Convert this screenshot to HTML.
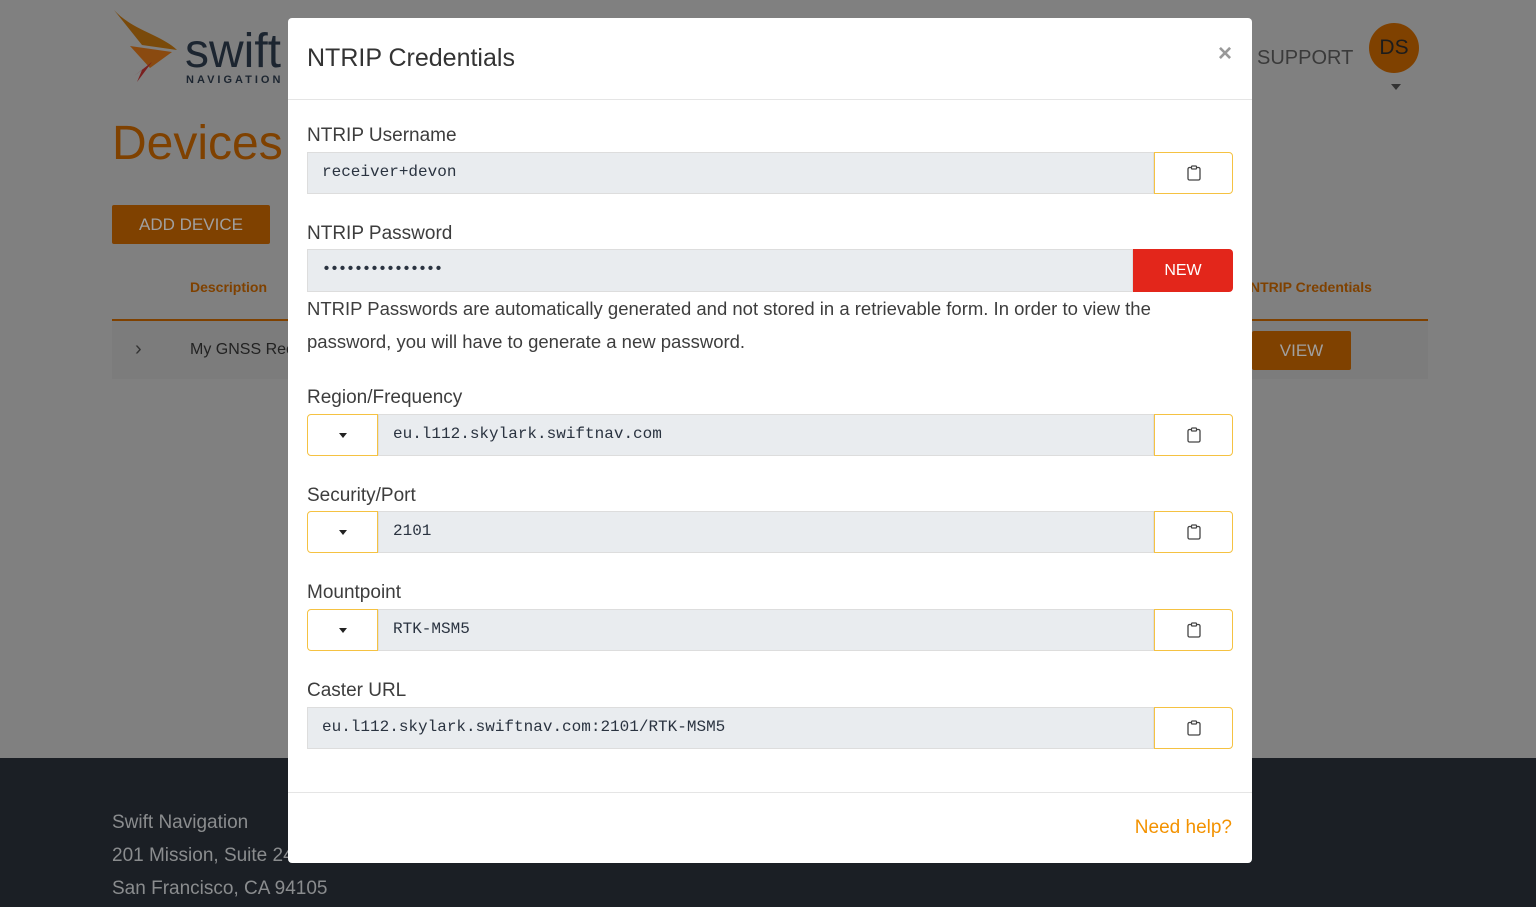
<!DOCTYPE html>
<html><head><meta charset="utf-8"><style>
*{box-sizing:border-box;margin:0;padding:0}
body{width:1536px;height:907px;overflow:hidden;position:relative;font-family:"Liberation Sans",sans-serif;background:#808080}
.bg{position:absolute;left:0;top:0;width:1536px;height:758px;background:#808080}
.foot{position:absolute;left:0;top:758px;width:1536px;height:149px;background:#1b1f25;color:#8a8c8e;font-size:19px}
.foot div{position:absolute;left:112px}
.modal{position:absolute;left:288px;top:18px;width:964px;height:845px;background:#fff;border-radius:4px}
.hd{height:82px;border-bottom:1px solid #e5e5e5;position:relative}
.hd h1{position:absolute;left:19px;top:26px;font-size:25px;font-weight:normal;color:#333}
.x{position:absolute;right:20px;top:22px;font-size:24px;color:#999;font-weight:bold}
.lbl{position:absolute;left:19px;font-size:19px;color:#3d3d3d}
.row{position:absolute;left:19px;width:926px;height:42px;display:flex}
.inp{flex:1;background:#e9ecef;border:1px solid #ddd;font-family:"Liberation Mono",monospace;font-size:16px;color:#2a3340;padding:10px 14px}
.cp{width:79px;border:1px solid #f5c242;border-radius:0 4px 4px 0;display:flex;align-items:center;justify-content:center}
.sel{width:71px;border:1px solid #f5c242;border-radius:4px 0 0 4px;display:flex;align-items:center;justify-content:center}
.sel:after{content:"";border-left:4px solid transparent;border-right:4px solid transparent;border-top:5px solid #222}
.new{width:100px;background:#e3261b;color:#fff;border-radius:0 4px 4px 0;display:flex;align-items:center;justify-content:center;font-size:16px}
.ft{position:absolute;left:0;top:774px;width:964px;border-top:1px solid #e5e5e5}
</style></head><body>
<div class="bg">
<svg style="position:absolute;left:112px;top:10px" width="70" height="75"><path d="M2 0 C20 20 50 25 65 40 L30 35 Z" fill="#7a4a0a"/><path d="M18 36 L60 42 L38 58 Z" fill="#8a4a10"/><path d="M40 52 L25 72 L30 60 L22 66 Z" fill="#7a2020"/></svg>
<div style="position:absolute;left:185px;top:24px;font-size:48px;color:#1c2530">swift</div>
<div style="position:absolute;left:186px;top:74px;font-size:11px;letter-spacing:3px;color:#1c2530;font-weight:bold">NAVIGATION</div>
<div style="position:absolute;left:112px;top:116px;font-size:48px;color:#7f4100">Devices</div>
<div style="position:absolute;left:112px;top:205px;width:158px;height:39px;background:#7f4100;border-radius:2px;color:#a0a0a0;font-size:17px;text-align:center;line-height:39px">ADD DEVICE</div>
<div style="position:absolute;left:190px;top:279px;font-size:14px;font-weight:bold;color:#7f4100">Description</div>
<div style="position:absolute;left:1250px;top:279px;font-size:14px;font-weight:bold;color:#7f4100">NTRIP Credentials</div>
<div style="position:absolute;left:112px;top:319px;width:1316px;height:2px;background:#7f4100"></div>
<div style="position:absolute;left:112px;top:321px;width:1316px;height:58px;background:#7c7c7c"></div>
<div style="position:absolute;left:135px;top:338px;font-size:20px;color:#333">&#8250;</div>
<div style="position:absolute;left:190px;top:341px;font-size:16px;color:#222">My GNSS Receiver</div>
<div style="position:absolute;left:1252px;top:331px;width:99px;height:39px;background:#7f4100;border-radius:2px;color:#a0a0a0;font-size:17px;text-align:center;line-height:39px">VIEW</div>
<div style="position:absolute;left:1257px;top:47px;font-size:20px;color:#3a3a3a">SUPPORT</div>
<div style="position:absolute;left:1369px;top:23px;width:50px;height:50px;border-radius:50%;background:#7f4100;color:#1c1c1c;font-size:21px;text-align:center;line-height:50px">DS</div>
<div style="position:absolute;left:1391px;top:84px;border-left:5px solid transparent;border-right:5px solid transparent;border-top:6px solid #333"></div>
</div>
<div class="foot"><div style="top:54px">Swift Navigation</div><div style="top:87px">201 Mission, Suite 2400</div><div style="top:120px">San Francisco, CA 94105</div></div>
<div class="modal">
<div class="hd"><h1>NTRIP Credentials</h1><span class="x">&#215;</span></div>
<div class="lbl" style="top:107px">NTRIP Username</div>
<div class="row" style="top:134px"><div class="inp">receiver+devon</div><div class="cp">CLIP</div></div>
<div class="lbl" style="top:205px">NTRIP Password</div>
<div class="row" style="top:231px;height:43px"><div class="inp" style="font-size:15px;letter-spacing:-1px;font-weight:bold;padding-top:11px">•••••••••••••••</div><div class="new">NEW</div></div>
<div class="lbl" style="top:274px;width:926px;line-height:33px;font-size:18.5px">NTRIP Passwords are automatically generated and not stored in a retrievable form. In order to view the password, you will have to generate a new password.</div>
<div class="lbl" style="top:369px">Region/Frequency</div>
<div class="row" style="top:396px"><div class="sel"></div><div class="inp">eu.l112.skylark.swiftnav.com</div><div class="cp">CLIP</div></div>
<div class="lbl" style="top:467px">Security/Port</div>
<div class="row" style="top:493px"><div class="sel"></div><div class="inp">2101</div><div class="cp">CLIP</div></div>
<div class="lbl" style="top:564px">Mountpoint</div>
<div class="row" style="top:591px"><div class="sel"></div><div class="inp">RTK-MSM5</div><div class="cp">CLIP</div></div>
<div class="lbl" style="top:662px">Caster URL</div>
<div class="row" style="top:689px"><div class="inp">eu.l112.skylark.swiftnav.com:2101/RTK-MSM5</div><div class="cp">CLIP</div></div>
<div class="ft"></div>
<div style="position:absolute;right:20px;top:799px;font-size:19px;color:#f39200">Need help?</div>
</div>
<script>
document.querySelectorAll('.cp').forEach(function(e){e.innerHTML='<svg width="14" height="16" viewBox="0 0 14 16"><rect x="1" y="2.5" width="12" height="12.5" rx="1.5" fill="none" stroke="#444" stroke-width="1.3"/><rect x="4.5" y="1" width="5" height="3" rx="0.8" fill="#fff" stroke="#444" stroke-width="1.2"/></svg>';});
</script>
</body></html>
